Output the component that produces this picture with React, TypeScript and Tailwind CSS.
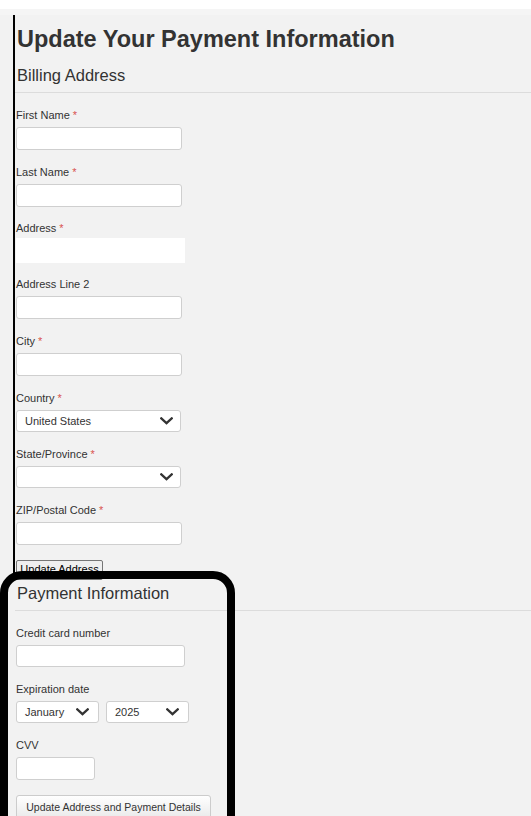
import React from "react";

const Req = () => <span className="text-[#d9534f] ml-[3px]">*</span>;

function Label({ text, req }: { text: string; req?: boolean }) {
  return (
    <div className="h-[14px] leading-[14px] text-[11px] text-[#333] mb-[5px]">
      {text}
      {req && <Req />}
    </div>
  );
}

function Chevron() {
  return (
    <svg width="13" height="8" viewBox="0 0 13 8" className="shrink-0">
      <path d="M1.3 1.4 L6.5 6.1 L11.7 1.4" fill="none" stroke="#333" strokeWidth="2.3" strokeLinecap="square" />
    </svg>
  );
}

function Select({ value, w, h = "h-[22px]", pr = "pr-[7px]" }: { value: string; w: string; h?: string; pr?: string }) {
  return (
    <div
      className={`${w} ${h} ${pr} bg-white border border-[#cfcfcf] rounded-[3px] flex items-center justify-between pl-[8px] text-[11px] text-[#333]`}
    >
      <span>{value}</span>
      <Chevron />
    </div>
  );
}

function Input({ w, h = "h-[23px]" }: { w: string; h?: string }) {
  return <input className={`${w} ${h} block bg-white border border-[#cfcfcf] rounded-[3px] outline-none`} />;
}

export default function App() {
  return (
    <div
      className="relative min-h-[816px] h-[816px] overflow-hidden bg-[#f2f2f2] text-[#333]"
      style={{ fontFamily: '"Liberation Sans", Arial, sans-serif' }}
    >
      <div className="h-[9px] bg-white" />
      <div className="h-[6px] bg-[#f5f5f5]" />

      {/* Billing section */}
      <div className="ml-[13px] border-l-2 border-black pt-[10px]">
        <h1 className="pl-[2px] text-[23.5px] leading-[28px] font-bold text-[#333]">Update Your Payment Information</h1>
        <h2 className="pl-[2px] mt-[12px] text-[16.5px] leading-[20px] text-[#333]">Billing Address</h2>
        <div className="mt-[7px] h-px bg-[#dcdcdc]" />

        <div className="pl-[1px] pt-[15px]">
          <div className="mb-[15px]">
            <Label text="First Name" req />
            <Input w="w-[166px]" />
          </div>
          <div className="mb-[14px]">
            <Label text="Last Name" req />
            <Input w="w-[166px]" />
          </div>
          <div className="mb-[14px]">
            <div className="h-[14px] leading-[14px] text-[11px] text-[#333] mb-[3px]">
              Address
              <Req />
            </div>
            <div className="w-[169px] h-[25px] bg-white" />
          </div>
          <div className="mb-[15px]">
            <Label text="Address Line 2" />
            <Input w="w-[166px]" />
          </div>
          <div className="mb-[15px]">
            <Label text="City" req />
            <Input w="w-[166px]" />
          </div>
          <div className="mb-[15px]">
            <Label text="Country" req />
            <Select value="United States" w="w-[165px]" />
          </div>
          <div className="mb-[15px]">
            <Label text="State/Province" req />
            <Select value="" w="w-[165px]" />
          </div>
          <div className="mb-[15px]">
            <Label text="ZIP/Postal Code" req />
            <Input w="w-[166px]" />
          </div>
          <button className="block w-[87px] h-[20px] border border-[#767676] bg-[#efefef] rounded-[2px] text-[11px] text-black leading-[16px] pb-[2px]">
            Update Address
          </button>
        </div>
      </div>

      {/* Payment section */}
      <div className="ml-[15px] pt-[3px]">
        <h2 className="pl-[2px] text-[16.5px] leading-[20px] text-[#333]">Payment Information</h2>
        <div className="mt-[7px] h-px bg-[#dcdcdc]" />
        <div className="pl-[1px] pt-[15px]">
          <div className="mb-[15px]">
            <Label text="Credit card number" />
            <Input w="w-[169px]" h="h-[22px]" />
          </div>
          <div className="mb-[15px]">
            <Label text="Expiration date" />
            <div className="flex gap-[7px]">
              <Select value="January" w="w-[83px]" pr="pr-[9px]" />
              <Select value="2025" w="w-[83px]" pr="pr-[9px]" />
            </div>
          </div>
          <div className="mb-[15px]">
            <Label text="CVV" />
            <Input w="w-[79px]" h="h-[23px]" />
          </div>
          <button className="block w-[195px] h-[26px] border border-[#cccccc] rounded-[3px] bg-gradient-to-b from-white to-[#e8e8e8] text-[10.5px] text-[#333] leading-[20px] pb-[2px]">
            Update Address and Payment Details
          </button>
        </div>
      </div>

      {/* Annotation overlay */}
      <div className="absolute left-0 top-[571px] w-[235px] h-[280px] border-[8px] border-black rounded-[22px] pointer-events-none" />
    </div>
  );
}
